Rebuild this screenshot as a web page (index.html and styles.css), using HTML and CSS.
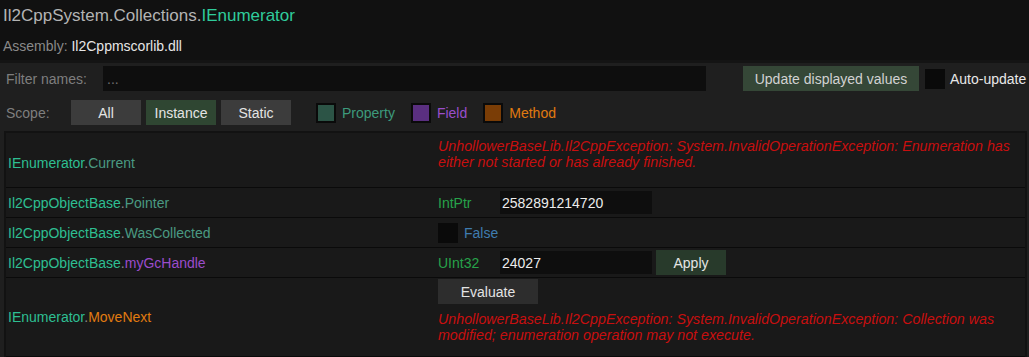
FILE: index.html
```html
<!DOCTYPE html>
<html>
<head>
<meta charset="utf-8">
<link rel="stylesheet" href="styles.css">
</head>
<body>
<div class="header">
  <div class="title"><span class="ns">Il2CppSystem.Collections.</span><span class="cls">IEnumerator</span></div>
  <div class="asm"><span class="asm-lbl">Assembly:</span> <span class="asm-val">Il2Cppmscorlib.dll</span></div>
</div>
<div class="panel">
  <div class="filter-row">
    <span class="lbl filter-lbl">Filter names:</span>
    <div class="input filter-input">...</div>
    <div class="btn update-btn">Update displayed values</div>
    <div class="chk auto-chk"></div>
    <span class="auto-lbl">Auto-update</span>
  </div>
  <div class="scope-row">
    <span class="lbl scope-lbl">Scope:</span>
    <div class="btn scope-btn">All</div>
    <div class="btn scope-btn active">Instance</div>
    <div class="btn scope-btn">Static</div>
    <div class="toggle"><span class="swatch sw-prop"></span><span class="t-prop">Property</span></div>
    <div class="toggle"><span class="swatch sw-field"></span><span class="t-field">Field</span></div>
    <div class="toggle"><span class="swatch sw-method"></span><span class="t-method">Method</span></div>
  </div>
  <div class="list">
    <div class="row row-tall">
      <div class="name name-low"><span class="cn">IEnumerator</span><span class="dot">.</span><span class="prop">Current</span></div>
      <div class="val"><div class="err err-c">UnhollowerBaseLib.Il2CppException: System.InvalidOperationException: Enumeration has either not started or has already finished.</div></div>
    </div>
    <div class="row">
      <div class="name"><span class="cn">Il2CppObjectBase</span><span class="dot">.</span><span class="prop">Pointer</span></div>
      <div class="val val-inline"><span class="type">IntPtr</span><div class="input val-input">2582891214720</div></div>
    </div>
    <div class="row">
      <div class="name"><span class="cn">Il2CppObjectBase</span><span class="dot">.</span><span class="prop">WasCollected</span></div>
      <div class="val val-inline"><div class="chk bool-chk"></div><span class="bool">False</span></div>
    </div>
    <div class="row">
      <div class="name"><span class="cn">Il2CppObjectBase</span><span class="dot">.</span><span class="field">myGcHandle</span></div>
      <div class="val val-inline"><span class="type">UInt32</span><div class="input val-input">24027</div><div class="btn apply-btn">Apply</div></div>
    </div>
    <div class="row row-method">
      <div class="name"><span class="cn">IEnumerator</span><span class="dot">.</span><span class="method">MoveNext</span></div>
      <div class="val"><div class="btn eval-btn">Evaluate</div><div class="err err-m">UnhollowerBaseLib.Il2CppException: System.InvalidOperationException: Collection was modified; enumeration operation may not execute.</div></div>
    </div>
  </div>
</div>
</body>
</html>
```
FILE: styles.css
```css
html, body {
  margin: 0;
  padding: 0;
  background: #1f1f1f;
  font-family: "Liberation Sans", Arial, sans-serif;
  font-size: 14px;
  color: #d8d8d8;
  overflow: hidden;
}
.header {
  background: #111111;
  height: 63px;
  padding: 0 3px;
  box-sizing: border-box;
  border-bottom: 3px solid #141414;
}
.title {
  font-size: 17px;
  line-height: 20px;
  padding-top: 6px;
}
.ns { color: #b4b4b4; }
.cls { color: #2fcc9b; }
.asm {
  font-size: 14px;
  line-height: 16px;
  padding-top: 12px;
}
.asm-lbl { color: #8a8a8a; }
.asm-val { color: #e6e6e6; }

.panel {
  padding-top: 3px;
}
.lbl { color: #7e7e7e; }
.filter-row {
  display: flex;
  align-items: center;
  height: 25px;
  padding-left: 6px;
}
.filter-lbl { width: 97px; }
.input {
  background: #0e0e0e;
  box-sizing: border-box;
  height: 25px;
  display: flex;
  align-items: center;
  padding-left: 4px;
}
.filter-input {
  width: 603px;
  color: #6e6e6e;
}
.btn {
  display: flex;
  align-items: center;
  justify-content: center;
  box-sizing: border-box;
  height: 25px;
  color: #e4e4e4;
}
.update-btn {
  background: #354737;
  width: 176px;
  margin-left: 37px;
  color: #d2d2d2;
}
.chk {
  background: #0a0a0a;
  width: 20px;
  height: 20px;
}
.auto-chk { margin-left: 6px; }
.auto-lbl {
  margin-left: 5px;
  color: #e8e8e8;
  white-space: nowrap;
}
.scope-row {
  display: flex;
  align-items: center;
  height: 25px;
  margin-top: 9px;
  padding-left: 6px;
}
.scope-lbl { width: 65px; }
.scope-btn {
  width: 70px;
  background: #3c3c3c;
  margin-right: 5px;
}
.scope-btn.active { background: #2f4632; }
.toggle {
  display: flex;
  align-items: center;
  margin-left: 20px;
}
.toggle + .toggle { margin-left: 16px; }
.swatch {
  width: 16px;
  height: 16px;
  border: 2px solid #0a0a0a;
  margin-right: 6px;
}
.sw-prop { background: #2c5446; }
.sw-field { background: #5a2f80; }
.sw-method { background: #7a3d06; }
.t-prop { color: #3d9a7c; }
.t-field { color: #9a4ecb; }
.t-method { color: #e07a10; }

.list {
  margin: 6px 2px 0 4px;
  border: 2px solid #121212;
  background: #191919;
}
.row {
  display: flex;
  align-items: center;
  min-height: 29px;
  border-bottom: 1px solid #0a0a0a;
}
.name {
  width: 430px;
  padding-left: 2px;
  flex: none;
  white-space: nowrap;
}
.name-low { padding-top: 5px; }
.cn { color: #2ebf92; }
.dot { color: #8a8a8a; }
.prop { color: #4a9a82; }
.field { color: #9b4ccc; }
.method { color: #e07b10; }
.val { flex: 1; }
.val-inline {
  display: flex;
  align-items: center;
}
.err {
  color: #c80f0f;
  font-style: italic;
  font-size: 14.25px;
  line-height: 16px;
  padding-right: 10px;
}
.err-c { padding: 5px 10px 17px 0; }
.type {
  color: #27a34a;
  width: 62px;
}
.val-input {
  width: 152px;
  height: 23px;
  color: #ececec;
  padding-left: 2px;
}
.bool-chk { margin-right: 6px; }
.bool { color: #3f7cb0; }
.apply-btn {
  width: 70px;
  margin-left: 4px;
  background: #283a2b;
}
.eval-btn {
  width: 100px;
  background: #2d2d2d;
  margin: 1px 0 7px;
}
.err-m { padding-bottom: 13px; }
```
